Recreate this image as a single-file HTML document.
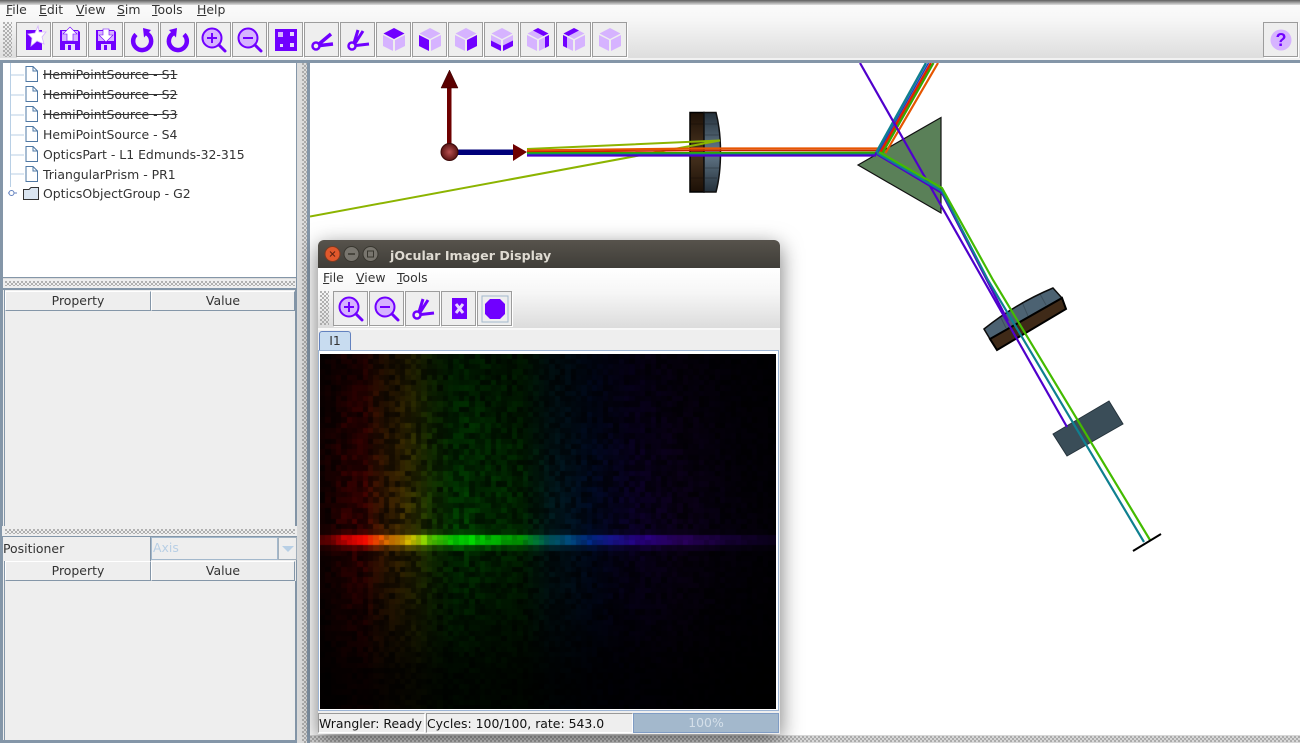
<!DOCTYPE html>
<html><head><meta charset="utf-8"><title>jOcular</title>
<style>
html,body{margin:0;padding:0;width:1300px;height:743px;overflow:hidden;background:#e8e8e8}
body{position:relative;font:12.45px "DejaVu Sans",sans-serif;color:#333}
*{box-sizing:border-box}
.a{position:absolute;white-space:nowrap}
.dots{background-image:radial-gradient(circle at 1px 1px,#a0a0a0 .9px,transparent 1.1px),radial-gradient(circle at 3px 3px,#a0a0a0 .9px,transparent 1.1px);background-size:4px 4px}
.btn{position:absolute;width:35px;height:35px;background:#eee;border:1px solid #9c9c9c;box-shadow:1px 1px 0 #fff}
.btn svg{position:absolute;left:-1px;top:-1px;width:35px;height:35px}
.row{position:absolute;left:43px;height:16px;line-height:16px;white-space:nowrap}
.hd{position:absolute;height:20px;line-height:17px;text-align:center;background:#eee;border-top:1px solid #fff;border-left:1px solid #fff;border-bottom:1px solid #8496a8;border-right:1px solid #8496a8}
u{text-decoration-thickness:1px;text-underline-offset:1px}
</style></head><body>

<svg width="0" height="0" style="position:absolute"><defs>
<g id="new"><path d="M10 8H26V28H10Z" fill="#7000ff"/><path d="M22 4L23 10L30 10L26 15L28 22L21 19L15 24L16 16L12 12L19 11Z" fill="#fff" stroke="#d6b3ff" stroke-width=".8"/></g>
<g id="flopU"><path d="M8 8H26L28 10V28H8Z" fill="#7000ff"/><path d="M10 9H26V19H10Z" fill="#d6b3ff"/><path d="M13 22H23V28H13Z" fill="#e6d4ff"/><path d="M16 23H19V28H16Z" fill="#7000ff"/><path d="M18 5L25 12H21V19H15V12H11Z" fill="#fff" stroke="#7000ff" stroke-width=".6"/></g>
<g id="flopD"><path d="M8 8H26L28 10V28H8Z" fill="#7000ff"/><path d="M10 9H26V19H10Z" fill="#d6b3ff"/><path d="M13 22H23V28H13Z" fill="#e6d4ff"/><path d="M16 23H19V28H16Z" fill="#7000ff"/><path d="M15 7H21V13H25L18 20L11 13H15Z" fill="#fff" stroke="#7000ff" stroke-width=".6"/></g>
<g id="ccw"><path d="M12 12.500A9 9 0 1 0 23 11.500" fill="none" stroke="#7000ff" stroke-width="4.500"/><path d="M19 6L27 8L20 15.500Z" fill="#7000ff"/></g>
<g id="cw"><path d="M24 12.500A9 9 0 1 1 13 11.500" fill="none" stroke="#7000ff" stroke-width="4.500"/><path d="M17 6L9 8L16 15.500Z" fill="#7000ff"/></g>
<g id="zi"><circle cx="16" cy="16" r="9.500" fill="#d6b3ff" stroke="#7000ff" stroke-width="2"/><path d="M23 23L29 29" stroke="#7000ff" stroke-width="3" stroke-linecap="round"/><path d="M11 16H21M16 11V21" stroke="#7000ff" stroke-width="2"/></g>
<g id="zo"><circle cx="16" cy="16" r="9.500" fill="#d6b3ff" stroke="#7000ff" stroke-width="2"/><path d="M23 23L29 29" stroke="#7000ff" stroke-width="3" stroke-linecap="round"/><path d="M11 16H21" stroke="#7000ff" stroke-width="2"/></g>
<g id="sq"><path d="M7 7H29V29H7Z" fill="#7000ff"/><path d="M10 10H15V15H10Z" fill="#d6b3ff"/><path d="M22 10H26V14H22ZM22 21H26V25H22ZM12 22H15V25H12Z" fill="#e6d4ff"/></g>
<g id="ang2"><circle cx="12" cy="24" r="3.500" fill="none" stroke="#7000ff" stroke-width="2.500"/><path d="M15 22L27 12M16 23.500L29 22" stroke="#7000ff" stroke-width="3.500"/></g>
<g id="ang3"><circle cx="12" cy="24" r="3.500" fill="none" stroke="#7000ff" stroke-width="2.500"/><path d="M14 21L18 8M15 21.500L23 9M16 23.500L29 22" stroke="#7000ff" stroke-width="3"/></g>
<g id="cube"><path d="M18 6L28.500 11.500L18 17L7.500 11.500Z" fill="#d6b3ff"/><path d="M7 13L17 18V29L7 24Z" fill="#d6b3ff"/><path d="M29 13L19 18V29L29 24Z" fill="#d6b3ff"/></g>
</defs></svg>

<!-- top bar -->
<div class="a" style="left:0;top:0;width:1300px;height:60px;background:linear-gradient(#fdfdfd 0,#f6f6f6 20px,#dcdcdc 100%)"></div>
<div class="a" style="left:0;top:0;width:1300px;height:5px;background:linear-gradient(#5e5e5e,#e0e0e0)"></div>
<div class="a" style="left:0;top:58px;width:1300px;height:2px;background:#f2f2f2"></div>
<div class="a" style="left:0;top:60px;width:1300px;height:3px;background:#8496a8"></div>

<div class="a" style="left:6px;top:2px;height:16px;line-height:16px"><u>F</u>ile</div>
<div class="a" style="left:39px;top:2px;height:16px;line-height:16px"><u>E</u>dit</div>
<div class="a" style="left:76px;top:2px;height:16px;line-height:16px"><u>V</u>iew</div>
<div class="a" style="left:117px;top:2px;height:16px;line-height:16px"><u>S</u>im</div>
<div class="a" style="left:152px;top:2px;height:16px;line-height:16px"><u>T</u>ools</div>
<div class="a" style="left:197px;top:2px;height:16px;line-height:16px"><u>H</u>elp</div>

<div class="a dots" style="left:3px;top:22px;width:9px;height:35px"></div>

<div class="btn" style="left:16px;top:22px"><svg><use href="#new"/></svg></div>
<div class="btn" style="left:52px;top:22px"><svg><use href="#flopU"/></svg></div>
<div class="btn" style="left:88px;top:22px"><svg><use href="#flopD"/></svg></div>
<div class="btn" style="left:124px;top:22px"><svg><use href="#ccw"/></svg></div>
<div class="btn" style="left:160px;top:22px"><svg><use href="#cw"/></svg></div>
<div class="btn" style="left:196px;top:22px"><svg><use href="#zi"/></svg></div>
<div class="btn" style="left:232px;top:22px"><svg><use href="#zo"/></svg></div>
<div class="btn" style="left:268px;top:22px"><svg><use href="#sq"/></svg></div>
<div class="btn" style="left:304px;top:22px"><svg><use href="#ang2"/></svg></div>
<div class="btn" style="left:340px;top:22px"><svg><use href="#ang3"/></svg></div>
<div class="btn" style="left:376px;top:22px"><svg><use href="#cube"/><path d="M18 6L28.500 11.500L18 17L7.500 11.500Z" fill="#7000ff"/></svg></div>
<div class="btn" style="left:412px;top:22px"><svg><use href="#cube"/><path d="M7 13L17 18V29L7 24Z" fill="#7000ff"/></svg></div>
<div class="btn" style="left:448px;top:22px"><svg><use href="#cube"/><path d="M29 13L19 18V29L29 24Z" fill="#7000ff"/></svg></div>
<div class="btn" style="left:484px;top:22px"><svg><use href="#cube"/><path d="M7 18.500L17 23.500V29L7 24ZM29 18.500L19 23.500V29L29 24Z" fill="#7000ff"/></svg></div>
<div class="btn" style="left:520px;top:22px"><svg><use href="#cube"/><path d="M13 8.500L18 6L28.500 11.500L23.500 14ZM29 13V24L25 26V15Z" fill="#7000ff"/></svg></div>
<div class="btn" style="left:556px;top:22px"><svg><use href="#cube"/><path d="M23 8.500L18 6L7.500 11.500L12.500 14ZM7 13V24L11 26V15Z" fill="#7000ff"/></svg></div>
<div class="btn" style="left:592px;top:22px"><svg><use href="#cube"/></svg></div>
<div class="btn" style="left:1263px;top:22px"><svg viewBox="0 0 35 35"><circle cx="18" cy="18" r="10.500" fill="#d6b3ff"/><text x="18" y="24" text-anchor="middle" font-family="Liberation Sans,sans-serif" font-weight="bold" font-size="18" fill="#7000ff">?</text></svg></div>

<!-- left column -->
<div class="a" style="left:0;top:63px;width:310px;height:680px;background:#dcdcdc"></div>
<div class="a" style="left:0;top:63px;width:3px;height:680px;background:#8496a8"></div>
<div class="a" style="left:296px;top:63px;width:1px;height:680px;background:#8496a8"></div>
<div class="a" style="left:307px;top:63px;width:3px;height:680px;background:#8496a8"></div>
<div class="a dots" style="left:302px;top:63px;width:5px;height:680px"></div>

<!-- tree -->
<div class="a" style="left:3px;top:63px;width:293px;height:215px;background:#fff;border-bottom:1px solid #8496a8"></div>
<svg class="a" style="left:0;top:0" width="300" height="210">
<path d="M10.500 63V187M11 75H24M11 95H24M11 115H24M11 135H24M11 155H24M11 174H24" stroke="#b8cfe5" fill="none"/>
<g fill="#fff" stroke="#4f78a4" stroke-width="1">
<path d="M26 66.500H33L37.500 71V81.500H26ZM33 66.500V71H37.500"/>
<path d="M26 86.500H33L37.500 91V101.500H26ZM33 86.500V91H37.500"/>
<path d="M26 106.500H33L37.500 111V121.500H26ZM33 106.500V111H37.500"/>
<path d="M26 126.500H33L37.500 131V141.500H26ZM33 126.500V131H37.500"/>
<path d="M26 146.500H33L37.500 151V161.500H26ZM33 146.500V151H37.500"/>
<path d="M26 166.500H33L37.500 171V181.500H26ZM33 166.500V171H37.500"/>
</g>
<path d="M23.500 189.500H29L31 187.500H38.500V199.500H23.500Z" fill="#dbe6f2" stroke="#333"/>
<path d="M8 193H17" stroke="#6382bf"/><circle cx="11.500" cy="193" r="2.500" fill="#fff" stroke="#6382bf"/>
</svg>
<div class="row" style="top:67px;text-decoration:line-through">HemiPointSource - S1</div>
<div class="row" style="top:87px;text-decoration:line-through">HemiPointSource - S2</div>
<div class="row" style="top:107px;text-decoration:line-through">HemiPointSource - S3</div>
<div class="row" style="top:127px">HemiPointSource - S4</div>
<div class="row" style="top:147px">OpticsPart - L1 Edmunds-32-315</div>
<div class="row" style="top:167px">TriangularPrism - PR1</div>
<div class="row" style="top:186px">OpticsObjectGroup - G2</div>

<!-- splitter 1 -->
<div class="a" style="left:3px;top:279px;width:293px;height:9px;background:#eee"></div>
<div class="a dots" style="left:5px;top:281px;width:290px;height:5px"></div>

<!-- property panel -->
<div class="a" style="left:3px;top:288px;width:293px;height:238px;background:#eee;border-top:2px solid #8496a8"></div>
<div class="a" style="left:4px;top:290px;width:1px;height:236px;background:#8496a8"></div>
<div class="a" style="left:295px;top:290px;width:1px;height:236px;background:#8496a8"></div>
<div class="hd" style="left:5px;top:291px;width:146px">Property</div>
<div class="hd" style="left:151px;top:291px;width:144px">Value</div>

<!-- splitter 2 -->
<div class="a" style="left:2px;top:526px;width:295px;height:10px;background:#eee"></div>
<div class="a dots" style="left:5px;top:529px;width:290px;height:5px"></div>

<!-- positioner -->
<div class="a" style="left:3px;top:536px;width:293px;height:207px;background:#eee;border-top:1px solid #8496a8"></div>
<div class="a" style="left:3px;top:538px;height:22px;line-height:22px">Positioner</div>
<div class="a" style="left:150px;top:536px;width:1px;height:25px;background:#8496a8"></div>
<div class="a" style="left:151px;top:537px;width:127px;height:23px;border:1px solid #a3b8cc;line-height:20px;padding-left:1px;color:#b8cfe5">Axis</div>
<div class="a" style="left:278px;top:537px;width:19px;height:23px;background:#eee;border:1px solid #a3b0bc"></div>
<svg class="a" style="left:281px;top:545px" width="14" height="8"><path d="M1 1H13L7 7Z" fill="#b8cfe5"/></svg>
<div class="hd" style="left:5px;top:561px;width:146px">Property</div>
<div class="hd" style="left:151px;top:561px;width:144px">Value</div>
<div class="a" style="left:4px;top:561px;width:1px;height:180px;background:#8496a8"></div>
<div class="a" style="left:295px;top:581px;width:1px;height:160px;background:#8496a8"></div>
<div class="a" style="left:3px;top:740px;width:293px;height:3px;background:#8496a8"></div>

<!-- scene -->
<div class="a" style="left:310px;top:63px;width:990px;height:672px;background:#fff"></div>
<div class="a" style="left:310px;top:735px;width:990px;height:8px;background:#d8d8d8"></div>
<div class="a dots" style="left:310px;top:736px;width:990px;height:6px"></div>
<svg class="a" style="left:0;top:0" width="1300" height="743">
<defs>
<linearGradient id="br" x1="0" y1="0" x2="0" y2="1"><stop offset="0" stop-color="#1c1006"/><stop offset=".5" stop-color="#4a3420"/><stop offset="1" stop-color="#1c1006"/></linearGradient>
<linearGradient id="bl" x1="0" y1="0" x2="0" y2="1"><stop offset="0" stop-color="#24303a"/><stop offset=".5" stop-color="#64798a"/><stop offset="1" stop-color="#24303a"/></linearGradient>
<radialGradient id="sp"><stop offset="0" stop-color="#b85050"/><stop offset="1" stop-color="#5a1414"/></radialGradient>
<clipPath id="sc"><rect x="310" y="63" width="990" height="672"/></clipPath>
</defs>
<g clip-path="url(#sc)">
<!-- axes -->
<rect x="447" y="88" width="4.500" height="60" fill="#6e0000"/>
<path d="M449.500 70L458 88H441Z" fill="#5a0000" stroke="#300" stroke-width=".5"/>
<rect x="449" y="149.500" width="68" height="5.500" fill="#00007a"/>
<path d="M527 152L513 144V161Z" fill="#6e0000"/>
<circle cx="449.500" cy="152" r="8.500" fill="url(#sp)" stroke="#3a0808"/>
<!-- lens 1 -->
<path d="M690 112.500H704V192H690Z" fill="url(#br)" stroke="#000" stroke-width="1.500"/>
<path d="M704 112.500H716Q720.500 130 720.500 152Q720.500 175 716 192H704Z" fill="url(#bl)" stroke="#111" stroke-width="1.500"/>
<path d="M691 124H703M691 178H703M705 124H717M705 178H717M705 135H719M705 168H719" stroke="#000" stroke-opacity=".25"/>
<!-- prism -->
<path d="M858 165L941 117.500V213Z" fill="#5a8058" stroke="#111" stroke-width="1.200"/>
<!-- horizontal beams -->
<path d="M310 216.500L720 140.500L527 149" fill="none" stroke="#8cb400" stroke-width="2"/>
<path d="M527 150.500L700 148.500H884" stroke="#e65500" stroke-width="2.200" fill="none"/>
<path d="M527 152L700 150.500H880" stroke="#cc2200" stroke-width="1.500" fill="none"/>
<path d="M527 153H700L880 152.500" stroke="#33a800" stroke-width="2" fill="none"/>
<path d="M527 154.500H878" stroke="#008888" stroke-width="2" fill="none"/>
<path d="M527 155.500H876" stroke="#5000cc" stroke-width="2.200" fill="none"/>
<!-- up beams -->
<path d="M876 153L926 63" stroke="#0f8090" stroke-width="2.500" fill="none"/>
<path d="M878 153L928.500 63" stroke="#2040c0" stroke-width="1.500" fill="none"/>
<path d="M880 153L931 63" stroke="#e02000" stroke-width="2.500" fill="none"/>
<path d="M882.500 153L933.500 63" stroke="#33a800" stroke-width="2.200" fill="none"/>
<path d="M885.500 153L938 63" stroke="#e65500" stroke-width="2.200" fill="none"/>
<!-- lens 2 -->
<path d="M984 329Q1015 304 1053 288L1062 298L990 339Z" fill="#4c6272" stroke="#0c0c0c" stroke-width="1.500"/>
<path d="M990 339L1062 298L1066 309L997 350Z" fill="#3f2a18" stroke="#000" stroke-width="2"/>
<path d="M1000 316L1006 328M1022 302L1028 316M1040 294L1046 305" stroke="#000" stroke-opacity=".2"/>
<!-- block -->
<path d="M1053 434L1109 401L1123 424L1067 456Z" fill="#3a4d58" stroke="#25333c"/>
<!-- purple beams -->
<path d="M860 63L1067 427" stroke="#5000cc" stroke-width="2.200" fill="none"/>
<path d="M875 153L942 193L1008 321" stroke="#5000cc" stroke-width="2.200" fill="none"/>
<!-- teal / green through -->
<path d="M877 153L942 191L988 280L1144 542" stroke="#0f8090" stroke-width="2.200" fill="none"/>
<path d="M879 152L942 188L993 280L1150 540" stroke="#44bb00" stroke-width="2.200" fill="none"/>
<!-- detector -->
<path d="M1133 551L1161 534" stroke="#000" stroke-width="2"/>
</g>
</svg>

<!-- imager window -->
<div class="a" style="left:318px;top:240px;width:462px;height:494px;background:#eee;border-radius:6px 6px 0 0;box-shadow:0 6px 22px rgba(0,0,0,.55)"></div>
<div class="a" style="left:318px;top:240px;width:462px;height:28px;border-radius:6px 6px 0 0;background:linear-gradient(#57534c,#3f3d38)"></div>
<svg class="a" style="left:318px;top:240px" width="80" height="28">
<circle cx="14.500" cy="14" r="7.500" fill="#e0582c" stroke="#7a3a22"/><path d="M12 11.500L17 16.500M17 11.500L12 16.500" stroke="#5a2010" stroke-width="1"/>
<circle cx="33.500" cy="14" r="7.500" fill="#78756e" stroke="#38362f"/><path d="M30 14H37" stroke="#38362f" stroke-width="1.500"/>
<circle cx="52.500" cy="14" r="7.500" fill="#78756e" stroke="#38362f"/><rect x="49.500" y="11" width="6" height="6" fill="none" stroke="#38362f"/>
</svg>
<div class="a" style="left:390px;top:247px;height:17px;line-height:17px;font-weight:bold;font-size:12.6px;color:#dfdbd2">jOcular Imager Display</div>

<div class="a" style="left:318px;top:268px;width:462px;height:60px;background:linear-gradient(#fff,#f6f6f6 25px,#dcdcdc)"></div>
<div class="a" style="left:323px;top:270px;height:16px;line-height:16px"><u>F</u>ile</div>
<div class="a" style="left:356px;top:270px;height:16px;line-height:16px"><u>V</u>iew</div>
<div class="a" style="left:397px;top:270px;height:16px;line-height:16px"><u>T</u>ools</div>
<div class="a dots" style="left:320px;top:291px;width:9px;height:34px"></div>
<div class="btn" style="left:333px;top:291px"><svg><use href="#zi"/></svg></div>
<div class="btn" style="left:369px;top:291px"><svg><use href="#zo"/></svg></div>
<div class="btn" style="left:405px;top:291px"><svg><use href="#ang3"/></svg></div>
<div class="btn" style="left:441px;top:291px"><svg viewBox="0 0 35 35"><path d="M11 7H26V28H11Z" fill="#7000ff"/><path d="M15 13L22 22M22 13L15 22" stroke="#e6d4ff" stroke-width="3"/></svg></div>
<div class="btn" style="left:477px;top:291px"><svg viewBox="0 0 35 35"><rect x="5" y="5" width="26" height="26" fill="none" stroke="#a3b8cc"/><path d="M13 8H23L28 13V23L23 28H13L8 23V13Z" fill="#7000ff"/></svg></div>
<div class="a" style="left:318px;top:328px;width:462px;height:2px;background:#f8f8f8"></div>
<div class="a" style="left:319px;top:331px;width:32px;height:20px;background:#c8dcf0;border:1px solid #6382bf;border-bottom:0;border-radius:3px 3px 0 0;text-align:center;line-height:18px">I1</div>
<div class="a" style="left:318px;top:350px;width:461px;height:361px;background:#fff;border:1px solid #9cb4d4"></div>

<div class="a" style="left:320px;top:354px;width:456px;height:355px;background:#000"></div>
<canvas id="c" width="456" height="355" style="position:absolute;left:320px;top:354px"></canvas>

<div class="a" style="left:318px;top:713px;width:107px;height:20px;background:#eee;border:1px solid #999;border-right-color:#fff;border-bottom-color:#fff;line-height:19px;color:#111">Wrangler: Ready</div>
<div class="a" style="left:426px;top:713px;width:207px;height:20px;background:#eee;border:1px solid #999;border-right-color:#fff;border-bottom-color:#fff;line-height:19px;color:#111">Cycles: 100/100, rate: 543.0</div>
<div class="a" style="left:633px;top:713px;width:146px;height:20px;background:#a3b8cc;border:1px solid #7f9cc4;line-height:18px;text-align:center;color:#d4dfe9">100%</div>

<script>
(function(){
var c=document.getElementById('c').getContext('2d');
var P=[[320,70,0,0],[335,130,0,0],[345,200,0,0],[365,230,10,0],[375,255,70,0],[385,210,100,0],[400,220,150,0],[410,210,190,0],[420,170,210,0],[430,90,200,0],[440,50,190,0],[455,0,200,0],[465,0,220,0],[490,0,180,0],[520,0,150,0],[535,0,120,50],[550,0,90,100],[570,0,70,120],[590,0,40,130],[610,20,20,130],[640,40,0,130],[680,40,0,90],[730,20,0,50],[776,10,0,25]];
function sp(x){for(var i=1;i<P.length;i++){if(x<=P[i][0]){var a=P[i-1],b=P[i],t=(x-a[0])/(b[0]-a[0]);return [a[1]+(b[1]-a[1])*t,a[2]+(b[2]-a[2])*t,a[3]+(b[3]-a[3])*t];}}return [10,0,25];}
var s=12345;function R(){s=(s*1664525+1013904223)>>>0;return s/4294967296;}
var w=16/3,off=-.7;
c.fillStyle='#000';c.fillRect(0,0,456,355);
for(var j=0;j<68;j++){
 var y0=Math.round(j*w+off),y1=Math.round((j+1)*w+off),yc=354+(j+.5)*w+off;
 for(var i=0;i<86;i++){
  var x0=Math.round(i*w),x1=Math.round((i+1)*w),xc=320+(i+.5)*w;
  var col=sp(xc),f,d=yc-539;
  if(Math.abs(d)<5.4){f=.82+R()*.25;}
  else if(Math.abs(d)<10.8){f=(d>0?.3:.2)+R()*.12;}
  else{
   var base=d<0?1.2*(.09+.1*(1+d/185)):(.18*Math.max(.18,1-d/170));
   f=base*(.45+R()*1.05);
  }
  c.fillStyle='rgb('+Math.min(255,col[0]*f|0)+','+Math.min(255,col[1]*f|0)+','+Math.min(255,col[2]*f|0)+')';
  c.fillRect(x0,y0,x1-x0,y1-y0);
 }
}
})();
</script>
</body></html>
